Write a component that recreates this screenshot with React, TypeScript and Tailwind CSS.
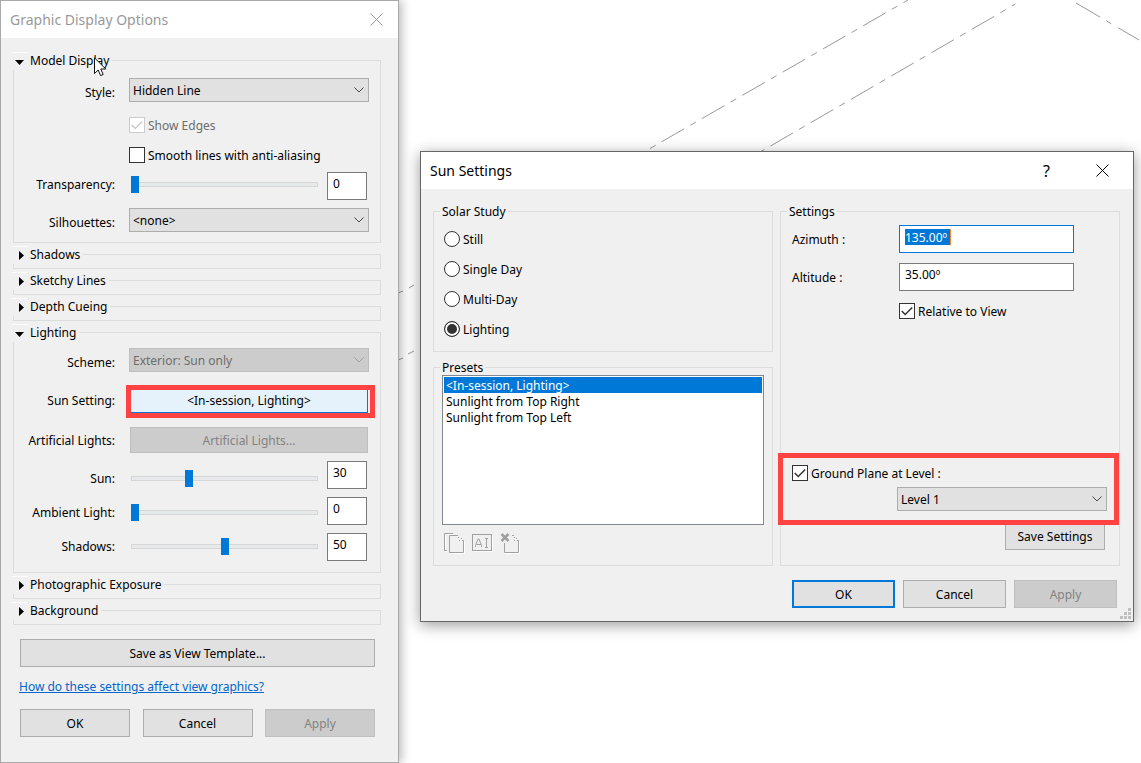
import { useState } from "react"
import type { ReactNode } from "react"
import clsx from "clsx"

type Option = { id: string; label: string }

const studies: Option[] = [
  { id: "still", label: "Still" },
  { id: "single-day", label: "Single Day" },
  { id: "multi-day", label: "Multi-Day" },
  { id: "lighting", label: "Lighting" },
]

const presets = ["<In-session, Lighting>", "Sunlight from Top Right", "Sunlight from Top Left"]

function CloseIcon() {
  return (
    <svg width="13" height="13" viewBox="0 0 13 13" stroke="currentColor" fill="none">
      <path d="M0.5 0.5l12 12M12.5 0.5l-12 12" />
    </svg>
  )
}

function DialogButton({
  children,
  primary,
  disabled,
  className,
}: {
  children: ReactNode
  primary?: boolean
  disabled?: boolean
  className?: string
}) {
  return (
    <button
      type="button"
      disabled={disabled}
      className={clsx(
        "h-7 text-center",
        primary ? "border-2 border-[#0078d7]" : "border",
        disabled
          ? "border-[#bfbfbf] bg-[#cccccc] text-[#838383]"
          : "bg-[#e1e1e1] hover:bg-[#e5f1fb]",
        !disabled && !primary && "border-[#adadad]",
        className
      )}
    >
      {children}
    </button>
  )
}

function Select({
  id,
  value,
  label,
  disabled,
}: {
  id: string
  value: string
  label?: string
  disabled?: boolean
}) {
  return (
    <div className={clsx("relative w-full", disabled ? "text-[#6d6d6d]" : "text-black")}>
      <select
        id={id}
        aria-label={label}
        disabled={disabled}
        defaultValue={value}
        className={clsx(
          "block h-6 w-full appearance-none border pr-6 pl-[3px] opacity-100",
          disabled ? "border-[#bfbfbf] bg-[#cccccc]" : "border-[#adadad] bg-[#e1e1e1]"
        )}
      >
        <option>{value}</option>
      </select>
      <svg
        className={clsx(
          "pointer-events-none absolute top-[9px] right-[5px]",
          disabled ? "text-[#a0a0a0]" : "text-[#444444]"
        )}
        width="10"
        height="6"
        viewBox="0 0 10 6"
        fill="none"
        stroke="currentColor"
      >
        <path d="M0.5 0.5L5 5L9.5 0.5" />
      </svg>
    </div>
  )
}

function Checkbox({
  label,
  checked = false,
  disabled,
}: {
  label: string
  checked?: boolean
  disabled?: boolean
}) {
  const [on, setOn] = useState(checked)

  return (
    <label className={clsx("flex h-4 items-center gap-[3px]", disabled && "text-[#6d6d6d]")}>
      <span className="relative size-4">
        <input
          type="checkbox"
          checked={on}
          disabled={disabled}
          onChange={(e) => setOn(e.target.checked)}
          className={clsx(
            "block size-4 appearance-none border bg-white",
            disabled ? "border-[#cccccc]" : "border-[#333333]"
          )}
        />
        {on && (
          <svg
            className="pointer-events-none absolute inset-0"
            width="16"
            height="16"
            viewBox="0 0 16 16"
            fill="none"
            stroke={disabled ? "#cccccc" : "#333333"}
            strokeWidth="1.5"
          >
            <path d="M2.7 8L6.2 11.5L13.2 4.5" />
          </svg>
        )}
      </span>
      {label}
    </label>
  )
}

function Slider({ id, value }: { id: string; value: number }) {
  return (
    <input
      id={id}
      type="range"
      defaultValue={value}
      className="block h-[17px] w-full appearance-none bg-transparent [&::-webkit-slider-runnable-track]:h-[5px] [&::-webkit-slider-runnable-track]:bg-[#e7eaea] [&::-webkit-slider-runnable-track]:inset-ring [&::-webkit-slider-runnable-track]:inset-ring-[#d6d6d6] [&::-webkit-slider-thumb]:-mt-[6px] [&::-webkit-slider-thumb]:h-[17px] [&::-webkit-slider-thumb]:w-2 [&::-webkit-slider-thumb]:appearance-none [&::-webkit-slider-thumb]:bg-[#0078d7]"
    />
  )
}

function NumberBox({ value, label }: { value: string; label: string }) {
  return (
    <input
      type="text"
      aria-label={label}
      defaultValue={value}
      className="block h-7 w-10 border border-[#7a7a7a] bg-white pb-[6px] pl-[5px]"
    />
  )
}

function SliderRow({ id, label, value }: { id: string; label: string; value: number }) {
  return (
    <div className="flex h-[34px] items-center gap-4">
      <label htmlFor={id} className="w-[101px] text-right">
        {label}
      </label>
      <div className="flex-1">
        <Slider id={id} value={value} />
      </div>
    </div>
  )
}

function SelectRow({
  id,
  label,
  value,
  disabled,
}: {
  id: string
  label: string
  value: string
  disabled?: boolean
}) {
  return (
    <div className="flex items-center gap-[14px]">
      <label htmlFor={id} className="w-[101px] shrink-0 pt-1 text-right">
        {label}
      </label>
      <Select id={id} value={value} disabled={disabled} />
    </div>
  )
}

function ButtonRow({ label, children }: { label: string; children: ReactNode }) {
  return (
    <div className="flex items-center gap-[15px]">
      <span className="w-[101px] shrink-0 text-right">{label}</span>
      <div className="relative mr-px flex-1">{children}</div>
    </div>
  )
}

// Collapsible group box, the frame starts half way down the title
function Section({ title, children }: { title: string; children?: ReactNode }) {
  const open = Boolean(children)

  return (
    <section>
      <div className="flex h-[18px]">
        <button
          type="button"
          aria-label={title}
          aria-expanded={open}
          className="flex w-4 items-center justify-center border-t border-white"
        >
          <svg width="10" height="10" viewBox="0 0 10 10">
            {open ? <path d="M0 3h9L4.5 8z" /> : <path d="M4 0v9l5-4.5z" />}
          </svg>
        </button>
        <h2 className="pr-[3px] pl-[2px] leading-[18px]">{title}</h2>
        <div className="h-[10px] flex-1 self-end border-t border-r border-[#dcdcdc]" />
      </div>
      <div className="ml-px min-h-[5px] border-x border-b border-[#dcdcdc]">{children}</div>
    </section>
  )
}

function GraphicDisplayOptions() {
  return (
    <div className="relative w-[399px] shrink-0 border border-[#a9a9a9] bg-[#f0f0f0] shadow-[2px_0_10px_rgba(0,0,0,0.3)]">
      <header className="flex h-[37px] items-center justify-between bg-white pr-[15px] pl-[9px] text-[#999999]">
        <h1 className="text-sm">Graphic Display Options</h1>
        <button type="button" aria-label="Close">
          <CloseIcon />
        </button>
      </header>

      <div className="flex flex-col gap-[3px] pt-[14px] pr-[17px] pl-[11px]">
        <Section title="Model Display">
          <div className="pt-2 pr-[11px] pb-[10px]">
            <SelectRow id="style" label="Style:" value="Hidden Line" />
            <div className="flex flex-col gap-[14px] pt-[15px] pb-[9px] pl-[115px]">
              <Checkbox label="Show Edges" checked disabled />
              <Checkbox label="Smooth lines with anti-aliasing" />
            </div>
            <div className="flex gap-[9px] pr-[2px] pb-2">
              <div className="-mt-[5px] h-8 flex-1">
                <SliderRow id="transparency" label="Transparency:" value={0} />
              </div>
              <NumberBox label="Transparency value" value="0" />
            </div>
            <SelectRow id="silhouettes" label="Silhouettes:" value="<none>" />
          </div>
        </Section>
        <Section title="Shadows" />
        <Section title="Sketchy Lines" />
        <Section title="Depth Cueing" />
        <Section title="Lighting">
          <div className="pt-[6px] pr-[11px] pb-[9px]">
            <SelectRow id="scheme" label="Scheme:" value="Exterior: Sun only" disabled />
            <div className="flex flex-col gap-[14px] pt-[15px] pb-2">
              <ButtonRow label="Sun Setting:">
                <button
                  type="button"
                  className="block h-[26px] w-full border border-[#0078d7] bg-[#e5f1fb]"
                >
                  {"<In-session, Lighting>"}
                </button>
                <div className="pointer-events-none absolute -top-[2px] -right-[7px] -bottom-[5px] -left-1 border-[5px] border-[#ff4343]" />
              </ButtonRow>
              <ButtonRow label="Artificial Lights:">
                <button
                  type="button"
                  disabled
                  className="block h-[26px] w-full border border-[#bfbfbf] bg-[#cccccc] text-[#838383]"
                >
                  Artificial Lights...
                </button>
              </ButtonRow>
            </div>
            <div className="flex items-start gap-[9px] pr-[2px]">
              <div className="flex-1">
                <SliderRow id="sun" label="Sun:" value={30} />
                <SliderRow id="ambient" label="Ambient Light:" value={0} />
                <SliderRow id="shadows" label="Shadows:" value={50} />
              </div>
              <div className="flex flex-col gap-2">
                <NumberBox label="Sun value" value="30" />
                <NumberBox label="Ambient light value" value="0" />
                <NumberBox label="Shadows value" value="50" />
              </div>
            </div>
          </div>
        </Section>
        <Section title="Photographic Exposure" />
        <Section title="Background" />
      </div>

      <footer className="flex flex-col pt-[14px] pr-[23px] pb-[25px] pl-[19px]">
        <DialogButton>Save as View Template...</DialogButton>
        <a href="#help" className="mt-[10px] mb-3 -ml-px self-start leading-5 text-[#0066cc] underline">
          How do these settings affect view graphics?
        </a>
        <div className="flex justify-between">
          <DialogButton className="w-[110px]">OK</DialogButton>
          <DialogButton className="w-[110px]">Cancel</DialogButton>
          <DialogButton className="w-[110px]" disabled>
            Apply
          </DialogButton>
        </div>
      </footer>

      <svg className="pointer-events-none absolute top-14 left-[93px]" width="13" height="20" viewBox="0 0 13 20">
        <path
          d="M0.5 0.8V16.5L4.2 13L6.6 18.6L9.2 17.5L6.8 12H11.7z"
          fill="white"
          stroke="#111111"
        />
      </svg>
    </div>
  )
}

function Group({ title, children }: { title: string; children: ReactNode }) {
  return (
    <fieldset className="min-w-0 border border-[#dcdcdc]">
      <legend className="ml-[6px] px-[2px] leading-[17px]">{title}</legend>
      {children}
    </fieldset>
  )
}

function PresetTools() {
  return (
    <div className="flex gap-[7px] pt-2 pl-[2px] text-[#a0a0a0]">
      <button type="button" aria-label="Duplicate">
        <svg width="21" height="21" viewBox="0 0 21 21" fill="none">
          <path d="M10 1.5H1.5V18.5H4" stroke="white" />
          <path d="M20.5 8V20.5H6.5" stroke="white" />
          <path d="M9 0.5H0.5V17.5H3M14 2.5H5.5V19.5H19.5V7.5H18M14.5 4v1M15 7.5h1M17 5.5h1" stroke="currentColor" />
        </svg>
      </button>
      <button type="button" aria-label="Rename">
        <svg width="21" height="21" viewBox="0 0 21 21" fill="none">
          <path d="M20.5 2V18.5H1" stroke="white" />
          <rect x="0.5" y="1.5" width="19" height="16" stroke="currentColor" />
          <path d="M3.5 14V12.5L6 6H7L9.5 12.5V14M4.5 11.5H9M13 5.5H16M13 14.5H16M14.5 6V14" stroke="currentColor" />
        </svg>
      </button>
      <button type="button" aria-label="Delete">
        <svg width="21" height="21" viewBox="0 0 21 21" fill="none">
          <path d="M19.5 8V20.5H4" stroke="white" />
          <path d="M1.5 1L8.5 8M8.5 1L1.5 8" stroke="currentColor" strokeWidth="2.6" />
          <path d="M4.5 10V19.5H18.5V7.5H17M12 2.5H14M14.5 4v1M14 7.5h1M16 5.5h1" stroke="currentColor" />
        </svg>
      </button>
    </div>
  )
}

function SunSettings() {
  const [study, setStudy] = useState("lighting")
  const [preset, setPreset] = useState(0)

  return (
    <div className="relative border border-[#666666] bg-[#f0f0f0] shadow-[0_3px_14px_rgba(0,0,0,0.4)]">
      <header className="flex h-[37px] items-center justify-between bg-white pr-6 pl-[9px]">
        <h1 className="text-sm">Sun Settings</h1>
        <div className="flex items-center gap-[46px]">
          <button type="button" aria-label="Help" className="text-base leading-5">
            ?
          </button>
          <button type="button" aria-label="Close">
            <CloseIcon />
          </button>
        </div>
      </header>

      <div className="grid grid-cols-2 gap-[7px] pt-[14px] pr-[13px] pl-3">
        <div className="flex flex-col gap-[7px]">
          <Group title="Solar Study">
            <div className="flex flex-col gap-[14px] pt-[11px] pb-[14px] pl-[10px]">
              {studies.map((s) => (
                <label key={s.id} className="flex h-4 items-center gap-[3px]">
                  <input
                    type="radio"
                    name="study"
                    checked={study === s.id}
                    onChange={() => setStudy(s.id)}
                    className="size-4 appearance-none rounded-full border border-[#333333] bg-white checked:bg-[#333333] checked:inset-ring-[2px] checked:inset-ring-white"
                  />
                  {s.label}
                </label>
              ))}
            </div>
          </Group>
          <Group title="Presets">
            <div className="-mt-px px-2 pb-[11px]">
              <ul role="listbox" aria-label="Presets" className="h-[150px] border border-[#828790] bg-white p-px">
                {presets.map((name, i) => (
                  <li
                    key={name}
                    role="option"
                    aria-selected={preset === i}
                    onClick={() => setPreset(i)}
                    className={clsx("h-4 pl-[2px] leading-[18px]", preset === i && "bg-[#0078d7] text-white")}
                  >
                    {name}
                  </li>
                ))}
              </ul>
              <PresetTools />
            </div>
          </Group>
        </div>

        <Group title="Settings">
          <div className="flex flex-col gap-[10px] pt-[5px] pr-[45px] pl-[11px]">
            <div className="flex items-center">
              <label htmlFor="azimuth" className="w-[107px]">
                Azimuth :
              </label>
              <div className="flex h-7 flex-1 border border-[#0078d7] bg-white pt-[3px] pl-[5px]">
                <input
                  id="azimuth"
                  type="text"
                  defaultValue="135.00º"
                  className="h-4 w-[46px] border-r border-[#ff8728] bg-[#0078d7] text-white outline-none"
                />
              </div>
            </div>
            <div className="flex items-center">
              <label htmlFor="altitude" className="w-[107px]">
                Altitude :
              </label>
              <input
                id="altitude"
                type="text"
                defaultValue="35.00º"
                className="h-7 min-w-0 flex-1 border border-[#7a7a7a] bg-white pb-[6px] pl-[5px]"
              />
            </div>
            <div className="pt-[2px] pl-[107px]">
              <Checkbox label="Relative to View" checked />
            </div>
          </div>

          <div className="relative mt-[146px] pr-3 pb-[11px] pl-[11px]">
            <Checkbox label="Ground Plane at Level :" checked />
            <div className="pt-[6px] pl-[105px]">
              <Select id="level" label="Level" value="Level 1" />
            </div>
            <div className="pointer-events-none absolute -top-3 right-0 -bottom-[3px] -left-[3px] border-[5px] border-[#ff4343]" />
          </div>
          <div className="flex justify-end pr-[14px]">
            <DialogButton className="w-[100px]">Save Settings</DialogButton>
          </div>
        </Group>
      </div>

      <footer className="flex justify-end gap-2 pt-[14px] pr-4 pb-[13px]">
        <DialogButton className="w-[103px]" primary>
          OK
        </DialogButton>
        <DialogButton className="w-[103px]">Cancel</DialogButton>
        <DialogButton className="w-[103px]" disabled>
          Apply
        </DialogButton>
      </footer>

      <svg className="absolute right-[2px] bottom-[2px]" width="11" height="11" fill="#bfbfbf">
        <path d="M8 0h3v3h-3zM8 4h3v3h-3zM4 4h3v3h-3zM8 8h3v3h-3zM4 8h3v3h-3zM0 8h3v3h-3z" />
      </svg>
    </div>
  )
}

export default function App() {
  return (
    <div className="relative flex min-h-screen items-start overflow-hidden bg-white font-['Noto_Sans',sans-serif] text-xs leading-[17px] text-black">
      {/* drawing sheet behind the dialogs */}
      <svg className="absolute top-0 left-0" width="1141" height="763" fill="none" stroke="#999999">
        <path d="M650 148.5L908 0" strokeDasharray="6.5 7 26 7" />
        <path d="M761 151.5L1019 2" strokeDasharray="4 7 26 7 6.5 7 26 7 6.5 7 26 7 6.5 7 26 7 6.5 7 26 7 6.5 7 26 7 6.5 7" />
        <path d="M1076 3L1139 40" strokeDasharray="28 7 6 8" />
        <path d="M398 293L403 291M409 288L414 285M398 360L403 358M408 354L414 351" />
      </svg>
      <GraphicDisplayOptions />
      <main className="min-w-0 flex-1 pt-[151px] pr-[7px] pl-[21px]">
        <SunSettings />
      </main>
    </div>
  )
}
